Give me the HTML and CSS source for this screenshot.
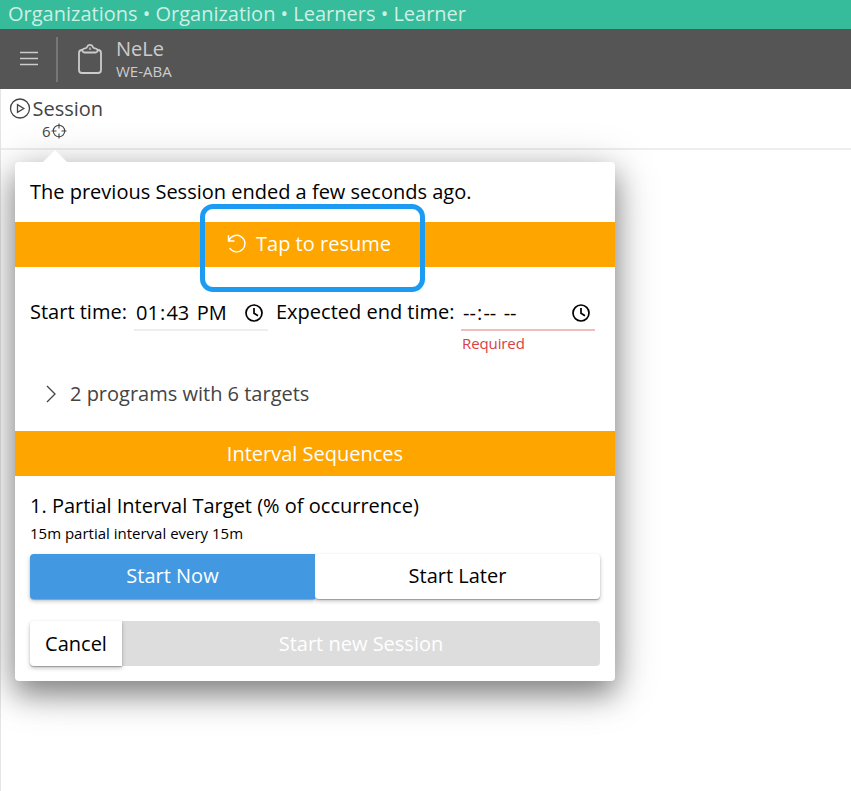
FILE: index.html
```html
<!DOCTYPE html>
<html lang="en">
<head>
<meta charset="utf-8">
<title>Session</title>
<link rel="stylesheet" href="styles.css">
</head>
<body>
<nav class="crumbs">Organizations • Organization • Learners • Learner</nav>
<header class="topbar">
  <svg class="menu-icon" viewBox="0 0 20 16"><path d="M0 1.500h18M0 7.500h18M0 13.500h18"/></svg>
  <span class="divider"></span>
  <svg class="clipboard" viewBox="0 0 24 32"><path d="M4.500 7H4a3 3 0 0 0-3 3v17a3 3 0 0 0 3 3h16a3 3 0 0 0 3-3V10a3 3 0 0 0-3-3h-.5M6.500 9.500h11a2 2 0 0 0 2-2.500q-.4-1.500-2.500-1.700-1.900-.2-2.300-1.600a2.900 2.900 0 0 0-5.400 0Q8.900 5.100 7 5.300 4.900 5.500 4.500 7a2 2 0 0 0 2 2.500z"/><circle cx="12" cy="5.800" r=".3"/></svg>
  <div class="learner"><div class="name">NeLe</div><div class="code">WE-ABA</div></div>
</header>
<main class="page">
  <div class="session-tab">
    <div class="tab-title"><svg class="play" viewBox="0 0 22 22"><circle cx="11" cy="10.500" r="9.500"/><path d="M8.500 6.700v7.600l6.300-3.800z"/></svg><span>Session</span></div>
    <div class="tab-count"><span>6</span><svg class="target" viewBox="0 0 16 16"><circle cx="8" cy="8" r="5.700"/><path d="M8 .5v5M8 10.500v5M.5 8h5M10.500 8h5"/></svg></div>
  </div>
  <section class="popover">
    <p class="message">The previous Session ended a few seconds ago.</p>
    <div class="band resume">
      <svg class="undo" viewBox="0 0 20 20"><path d="M1.500 1v6h6M1.800 6.800A8.300 8.300 0 1 1 2.600 14"/></svg><span>Tap to resume</span>
      <span class="highlight"></span>
    </div>
    <div class="times">
      <span class="label start">Start time:</span>
      <div class="time-input"><span class="value"><span class="part">01</span>:<span class="part">43</span> <span class="part">PM</span></span><svg class="clock" viewBox="0 0 20 20"><circle cx="10" cy="10" r="8"/><path d="M10 5v5.300l4 2.500"/></svg></div>
      <span class="label end">Expected end time:</span>
      <div class="field">
        <div class="time-input invalid"><span class="value"><span class="part">--</span>:<span class="part">--</span> <span class="part">--</span></span><svg class="clock" viewBox="0 0 20 20"><circle cx="10" cy="10" r="8"/><path d="M10 5v5.300l4 2.500"/></svg></div>
        <div class="error">Required</div>
      </div>
    </div>
    <div class="programs"><svg class="chevron" viewBox="0 0 10 18"><path d="M1 1l8 8-8 8"/></svg><span>2 programs with 6 targets</span></div>
    <div class="band">Interval Sequences</div>
    <div class="sequence">
      <div class="sequence-name">1. Partial Interval Target (% of occurrence)</div>
      <div class="sequence-info">15m partial interval every 15m</div>
      <div class="buttons">
        <div class="btn primary">Start Now</div>
        <div class="btn later">Start Later</div>
      </div>
      <div class="buttons actions">
        <div class="btn cancel">Cancel</div>
        <div class="btn disabled">Start new Session</div>
      </div>
    </div>
  </section>
</main>
</body>
</html>
```
FILE: styles.css
```css
* { box-sizing: border-box; }
body {
  margin: 0;
  height: 791px;
  overflow: hidden;
  font: 20px/30px "Open Sans", sans-serif;
  color: #000;
  background: #fff;
}
svg { display: block; flex: none; fill: none; stroke: currentColor; }
.crumbs {
  height: 29px;
  padding-left: 8px;
  line-height: 28px;
  white-space: nowrap;
  color: #cdf0e5;
  background: #36bb9b;
}
.topbar {
  display: flex;
  align-items: center;
  height: 60px;
  color: #ccc;
  background: #555;
}
.menu-icon { width: 20px; height: 16px; margin-left: 20px; stroke-width: 1.4; }
.divider { width: 2px; height: 45px; margin-left: 16px; background: #777; }
.clipboard { width: 24px; height: 32px; margin-left: 20px; stroke-width: 1.8; }
.learner { margin-left: 14px; }
.name { line-height: 24px; }
.code { font-size: 15px; line-height: 20px; }
.page { position: relative; height: 702px; border-left: 1px solid #e5e5e5; }
.session-tab {
  height: 61px;
  padding: 5px 0 0 8px;
  color: #444;
  border-bottom: 2px solid #eee;
}
.tab-title { display: flex; align-items: center; gap: 1.5px; height: 29px; }
.play { width: 22px; height: 22px; stroke-width: 1.3; }
.tab-count { display: flex; align-items: center; height: 15px; padding-left: 33px; font-size: 15px; }
.target { width: 16px; height: 16px; margin-left: .4px; stroke-width: 1.1; }
.popover {
  position: absolute;
  top: 73px;
  left: 14px;
  width: 600px;
  height: 519px;
  background: #fff;
  border-radius: 4px;
  box-shadow: 0 13px 28px rgba(0,0,0,.38), 0 8px 48px rgba(0,0,0,.23);
}
.popover::before {
  content: "";
  position: absolute;
  top: -12px;
  left: 28px;
  border: 12px solid transparent;
  border-top: 0;
  border-bottom-color: #fff;
}
.message { margin: 0; height: 60px; padding: 15px; }
.band {
  display: flex;
  align-items: center;
  justify-content: center;
  height: 45px;
  color: #fff;
  background: #ffa500;
}
.resume { position: relative; gap: 9px; padding: 0 12px 2px 0; }
.undo { width: 20px; height: 20px; stroke-width: 1.4; }
.highlight {
  position: absolute;
  top: -18px;
  left: 185px;
  width: 225px;
  height: 88px;
  border: 5px solid #1b9cf2;
  border-radius: 13px;
}
.times { display: flex; align-items: flex-start; height: 104px; padding: 30px 15px 0; white-space: nowrap; }
.start { width: 104px; }
.end { width: 185px; margin-left: 8px; }
.time-input {
  display: flex;
  align-items: center;
  justify-content: space-between;
  width: 134px;
  height: 34px;
  padding: 0 4.5px 0 1px;
  border-bottom: 2px solid #eee;
}
.time-input.invalid { border-color: #f0bcbc; }
.part { padding: 0 1.1px; }
.clock { width: 20px; height: 20px; stroke-width: 1.7; }
.error { padding-left: 1px; font-size: 15px; line-height: 24px; letter-spacing: -.1px; color: #d9403f; }
.programs { display: flex; align-items: center; height: 60px; padding: 0 0 14px 31px; color: #444; }
.chevron { width: 10px; height: 18px; margin-right: 14px; stroke-width: 1.3; }
.sequence { padding: 15px 15px 0; }
.sequence-info { font-size: 15px; line-height: 25px; }
.buttons { display: flex; height: 45px; margin-top: 8px; line-height: 44px; text-align: center; }
.btn { flex: 1; border-radius: 4px; box-shadow: 0 2px 4px rgba(0,0,0,.25), 0 1px 1px rgba(0,0,0,.25); }
.primary { color: #fff; background: #4299e1; border-radius: 4px 0 0 4px; }
.later { background: #fff; clip-path: inset(-4px -4px -6px 0); }
.actions { margin-top: 22px; line-height: 45px; }
.cancel { position: relative; flex: 0 0 92px; background: #fff; border-radius: 4px 0 0 4px; }
.disabled { color: #fff; background: #ddd; border-radius: 0 4px 4px 0; box-shadow: none; }
```
